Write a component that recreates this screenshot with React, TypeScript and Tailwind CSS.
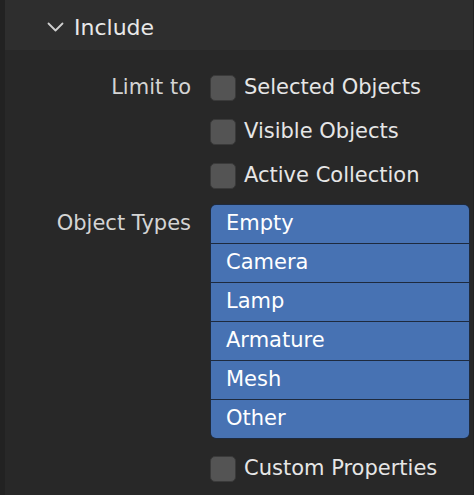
const types = ['Empty', 'Camera', 'Lamp', 'Armature', 'Mesh', 'Other'];

function Checkbox({ label }: { label: string }) {
    return (
        <div className="flex h-[44px] items-center gap-[8px]">
            <div className="h-[26px] w-[26px] rounded-[5px] border border-[#3a3a3a] bg-[#545454]" />
            <span className="text-[21px] text-[#e6e6e6]">{label}</span>
        </div>
    );
}

export default function App() {
    return (
        <div
            className="flex h-[495px] w-[474px] border-l-[5px] border-r border-[#222222] bg-[#282828]"
            style={{ fontFamily: '"DejaVu Sans", sans-serif' }}
        >
            <div className="flex w-full flex-col">
                {/* Panel header */}
                <div className="flex h-[50px] items-center gap-[10px] bg-[#2e2e2e] pl-[42px] pt-[4px]">
                    <svg width="17" height="11" viewBox="0 0 17 11" fill="none">
                        <path d="M1.5 1.5 L8.5 8.5 L15.5 1.5" stroke="#cfcfcf" strokeWidth="1.8" strokeLinecap="round" strokeLinejoin="round" />
                    </svg>
                    <span className="text-[22px] text-[#e8e8e8]">Include</span>
                </div>

                {/* Body */}
                <div className="grid grid-cols-[186px_1fr] gap-x-[19px] pt-[16px]">
                    <div className="flex h-[44px] items-center justify-end text-[21px] text-[#d4d4d4]">Limit to</div>
                    <div className="flex flex-col">
                        <Checkbox label="Selected Objects" />
                        <Checkbox label="Visible Objects" />
                        <Checkbox label="Active Collection" />
                    </div>

                    <div className="mt-[6px] flex h-[39px] items-center justify-end text-[21px] text-[#d4d4d4]">Object Types</div>
                    <div className="mt-[6px] mr-[3px] flex flex-col overflow-hidden rounded-[6px] border border-[#1e2a3e] bg-[#1e2a3e]">
                        {types.map((t, i) => (
                            <div
                                key={t}
                                className={`flex h-[38px] items-center bg-[#4772b3] pl-[15px] text-[21px] text-white ${i > 0 ? 'mt-px' : ''}`}
                            >
                                {t}
                            </div>
                        ))}
                    </div>

                    <div />
                    <div className="mt-[8px]">
                        <Checkbox label="Custom Properties" />
                    </div>
                </div>
            </div>
        </div>
    );
}
